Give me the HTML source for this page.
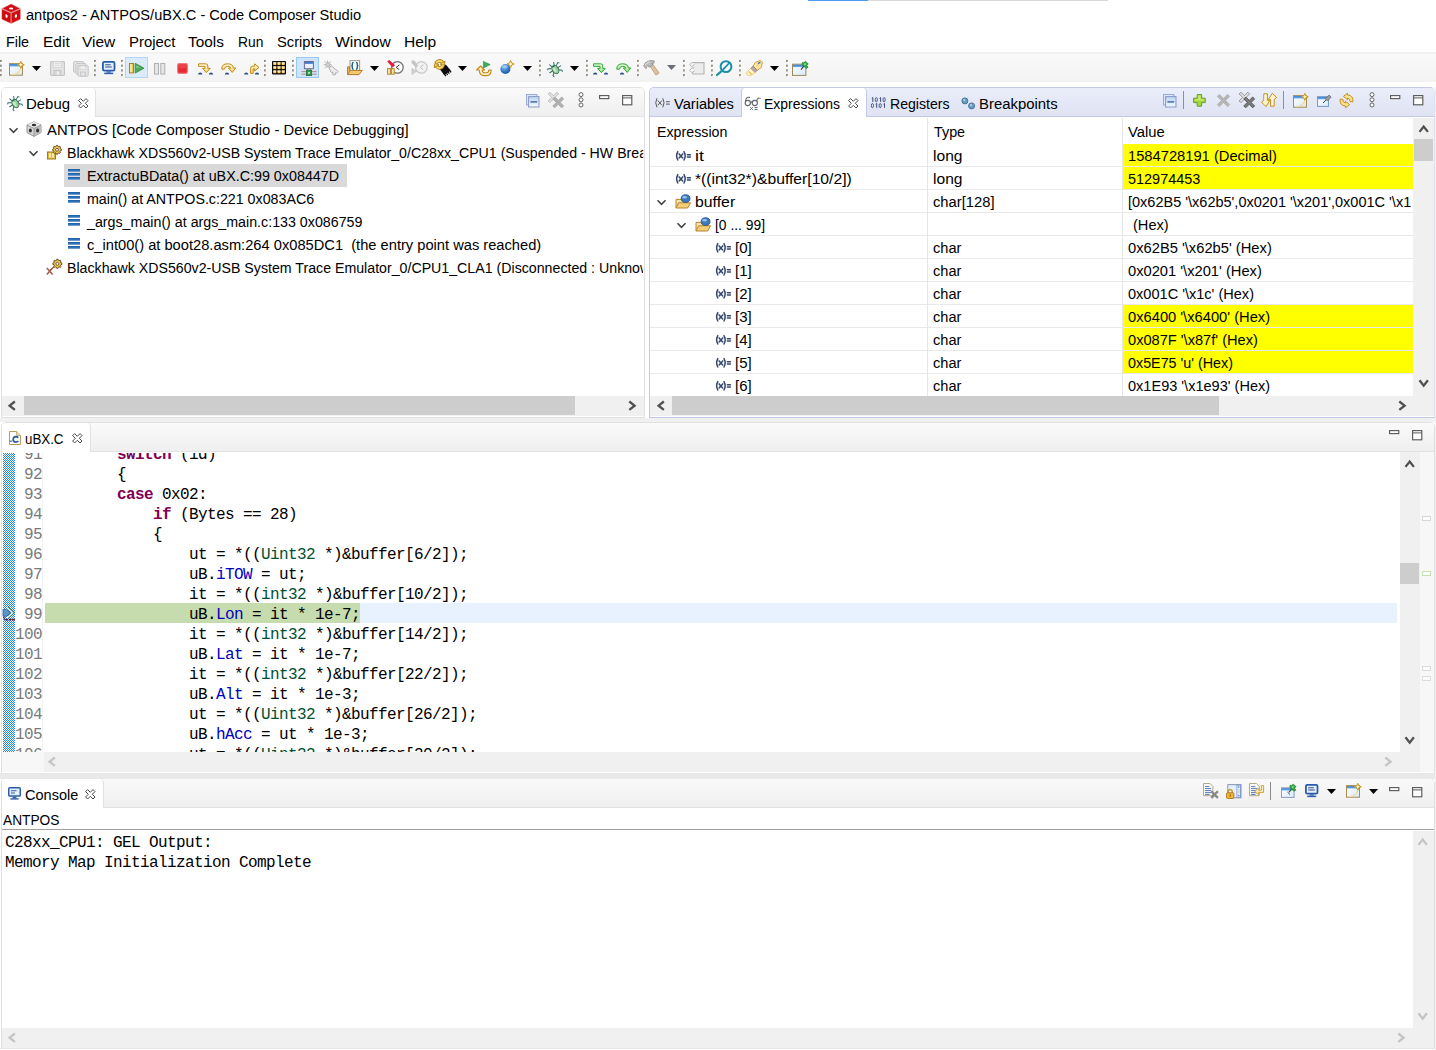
<!DOCTYPE html>
<html>
<head>
<meta charset="utf-8">
<title>antpos2 - ANTPOS/uBX.C - Code Composer Studio</title>
<style>
*{box-sizing:border-box;margin:0;padding:0}
html,body{width:1436px;height:1050px;overflow:hidden;background:#fff}
body{position:relative;font-family:"Liberation Sans",sans-serif;font-size:14.5px;color:#000}
.a{position:absolute}
.t{position:absolute;white-space:pre;line-height:20px;height:20px}
.m{position:absolute;white-space:pre;font-family:"Liberation Mono",monospace;font-size:16px;letter-spacing:-0.602px;line-height:20px;height:20px}
.ln{color:#7a7a7a}
.kw{color:#7f0055;font-weight:bold}
.ty{color:#005032}
.fd{color:#0000c0}
.panel{position:absolute;background:#fff;border:1px solid #e0e0e0;border-radius:5px 5px 0 0}
.tabbar{position:absolute;left:0;top:0;right:0;height:29px;background:linear-gradient(#fafafa,#efefef);border-bottom:1px solid #e2e2e2;border-radius:4px 4px 0 0}
.tab{position:absolute;top:0;height:29px;background:#fff;border-right:1px solid #e2e2e2;border-radius:4px 4px 0 0}
.tab::after{content:"";position:absolute;left:0;right:0;bottom:-1px;height:1px;background:#fff}
svg{position:absolute;overflow:visible}
</style>
</head>
<body>

<!-- ===== title bar ===== -->
<div class="a" style="left:0px;top:0px;width:1436px;height:29px;background:#fff;"></div>
<div class="a" style="left:808px;top:0px;width:60px;height:1px;background:#4d9bf5;"></div>
<div class="a" style="left:868px;top:0px;width:240px;height:1px;background:#d9d9d9;"></div>
<div class="t" style="left:26.0px;top:4.5px;font-size:15.4px;transform:scaleX(0.9482);transform-origin:0 50%;">antpos2 - ANTPOS/uBX.C - Code Composer Studio</div>
<!-- ===== menu bar ===== -->
<div class="t" style="left:5.8px;top:31.5px;font-size:15.4px;transform:scaleX(0.9310);transform-origin:0 50%;">File</div>
<div class="t" style="left:42.8px;top:31.5px;font-size:15.4px;transform:scaleX(1.0064);transform-origin:0 50%;">Edit</div>
<div class="t" style="left:82.0px;top:31.5px;font-size:15.4px;transform:scaleX(1.0032);transform-origin:0 50%;">View</div>
<div class="t" style="left:129.1px;top:31.5px;font-size:15.4px;transform:scaleX(0.9686);transform-origin:0 50%;">Project</div>
<div class="t" style="left:188.3px;top:31.5px;font-size:15.4px;transform:scaleX(0.9990);transform-origin:0 50%;">Tools</div>
<div class="t" style="left:238.2px;top:31.5px;font-size:15.4px;transform:scaleX(0.8961);transform-origin:0 50%;">Run</div>
<div class="t" style="left:276.5px;top:31.5px;font-size:15.4px;transform:scaleX(0.9565);transform-origin:0 50%;">Scripts</div>
<div class="t" style="left:334.5px;top:31.5px;font-size:15.4px;transform:scaleX(1.0174);transform-origin:0 50%;">Window</div>
<div class="t" style="left:404.2px;top:31.5px;font-size:15.4px;transform:scaleX(1.0140);transform-origin:0 50%;">Help</div>
<!-- ===== toolbar ===== -->
<div class="a" style="left:0px;top:52px;width:1436px;height:30px;background:#f6f6f6;background:linear-gradient(#eeeeee 0,#f4f4f4 1.5px,#f9f9f9 3px,#f7f7f7 50%,#f2f2f2 100%)"></div>
<!-- TOOLBAR-ICONS -->
<!-- ===== panel frames ===== -->
<div id="debug" class="panel" style="left:1px;top:87px;width:644px;height:331px">
  <div class="tabbar"></div><div class="tab" style="left:0;width:94px"></div></div>
<div id="expr" class="panel" style="left:649px;top:87px;width:786px;height:331px;border-color:#c3c9e6;border-right-color:#dde1f2">
  <div class="tabbar" style="background:linear-gradient(#eaedfa,#dfe3f2);border-bottom-color:#c3c9e6"></div>
  <div class="tab" style="left:91px;width:126px;border-left:1px solid #c3c9e6;border-right-color:#c3c9e6"></div></div>
<div id="editor" class="panel" style="left:1px;top:422px;width:1434px;height:353px">
  <div class="tabbar"></div><div class="tab" style="left:0;width:89px"></div></div>
<div id="console" class="panel" style="left:1px;top:778px;width:1434px;height:271px">
  <div class="tabbar"></div><div class="tab" style="left:0;width:102px"></div></div>
<!-- ===== Debug view content ===== -->
<svg style="left:7px;top:95px" width="16" height="16" viewBox="0 0 16 16"><g transform="translate(8 8) scale(0.9) rotate(-32) translate(-8 -8)"><g stroke="#2c6a6a" stroke-width="1.1" fill="none" stroke-linecap="round">
<path d="M4.6 5.4 L1.6 3.6 L0.6 4.6 M4 8.4 H0.8 M4.6 11 L2.2 13.2 L2.6 14.6 M11.4 5.4 L14.4 3.6 L15.4 4.6 M12 8.4 H15.2 M11.4 11 L13.8 13.2 L13.4 14.6 M6.4 3.8 L5.4 1 M9.6 3.8 L10.6 1"/></g>
<ellipse cx="8" cy="8.8" rx="3.5" ry="4.9" fill="#9ccb94" stroke="#2c6a5c" stroke-width="1"/>
<ellipse cx="7.2" cy="8.6" rx="1.5" ry="3" fill="#d4ecc8" opacity=".85"/>
<path d="M5.4 4.8 Q8 2.4 10.6 4.8 Q8 6 5.4 4.8Z" fill="#2c6a5c"/></g></svg>
<div class="t" style="left:26.0px;top:93.5px;font-size:15.2px;transform:scaleX(0.9829);transform-origin:0 50%;">Debug</div>
<svg style="left:77.7px;top:97.8px" width="11" height="11" viewBox="0 0 11 11"><path d="M0.6 2.6 L2.6 0.6 L5.3 3.3 L8 0.6 L10 2.6 L7.3 5.3 L10 8 L8 10 L5.3 7.3 L2.6 10 L0.6 8 L3.3 5.3 Z" fill="#fff" stroke="#4c4c4c" stroke-width="1" stroke-linejoin="round"/></svg>
<!-- DEBUG-TB -->
<svg style="left:578px;top:92px" width="6" height="16" viewBox="0 0 6 16"><g fill="#fff" stroke="#666" stroke-width="1"><circle cx="3" cy="2.6" r="2"/><circle cx="3" cy="7.8" r="2"/><circle cx="3" cy="13" r="2"/></g></svg>
<svg style="left:599px;top:94.5px" width="11" height="5" viewBox="0 0 11 5"><rect x="0.6" y="0.6" width="9.2" height="3" fill="#fff" stroke="#5a5a5a" stroke-width="1.15"/></svg>
<svg style="left:622px;top:94.5px" width="11" height="11" viewBox="0 0 11 11"><rect x="0.6" y="0.6" width="9.2" height="9.2" fill="#fff" stroke="#5a5a5a" stroke-width="1.15"/><path d="M0.6 2.9 H9.8" stroke="#5a5a5a" stroke-width="1"/></svg>
<div class="a" style="left:64px;top:164px;width:283px;height:23px;background:#d9d9d9;"></div>
<svg style="left:9.0px;top:127.9px" width="9" height="5" viewBox="0 0 9 5"><path d="M0.5 0.3 L4.5 4.4 L8.5 0.3" fill="none" stroke="#444" stroke-width="1.6"/></svg>
<svg style="left:26px;top:121px" width="16" height="16" viewBox="0 0 16 16"><path d="M8 0.8 L15 4 V11.6 L8 15.4 L1 11.6 V4 Z" fill="#d6d6d6" stroke="#8a8a8a" stroke-width="0.9"/>
<path d="M8 0.8 L15 4 L8 7.4 L1 4Z" fill="#ececec"/>
<path d="M8 7.4 L15 4 V11.6 L8 15.4Z" fill="#bdbdbd"/>
<path d="M1 4 L8 7.4 L15 4 M8 7.4 V15.4" fill="none" stroke="#8e8e8e" stroke-width="0.9"/>
<g fill="#2e2e2e"><ellipse cx="8" cy="4" rx="2.2" ry="1.3"/><ellipse cx="4.4" cy="9.6" rx="1.5" ry="2"/><ellipse cx="11.6" cy="9.6" rx="1.5" ry="2"/></g></svg>
<div class="t" style="left:46.8px;top:119.5px;font-size:15.2px;transform:scaleX(0.9760);transform-origin:0 50%;">ANTPOS [Code Composer Studio - Device Debugging]</div>
<svg style="left:29.0px;top:150.7px" width="9" height="5" viewBox="0 0 9 5"><path d="M0.5 0.3 L4.5 4.4 L8.5 0.3" fill="none" stroke="#444" stroke-width="1.6"/></svg>
<svg style="left:47px;top:145px" width="16" height="16" viewBox="0 0 16 16"><rect x="0.5" y="7" width="8" height="7" fill="#e3b93c" stroke="#a07a1a" stroke-width="1"/><rect x="2.2" y="8.2" width="1.6" height="4.6" fill="#fff3c0"/><rect x="5.2" y="8.2" width="1.6" height="4.6" fill="#fff3c0"/><path d="M14.46 4.22 L14.46 5.38 L13.39 5.71 L13.04 6.55 L13.57 7.54 L12.74 8.37 L11.75 7.84 L10.91 8.19 L10.58 9.26 L9.42 9.26 L9.09 8.19 L8.25 7.84 L7.26 8.37 L6.43 7.54 L6.96 6.55 L6.61 5.71 L5.54 5.38 L5.54 4.22 L6.61 3.89 L6.96 3.05 L6.43 2.06 L7.26 1.23 L8.25 1.76 L9.09 1.41 L9.42 0.34 L10.58 0.34 L10.91 1.41 L11.75 1.76 L12.74 1.23 L13.57 2.06 L13.04 3.05 L13.39 3.89Z" fill="#f2c54e" stroke="#5e3c1e" stroke-width="0.9" stroke-linejoin="round"/><circle cx="10" cy="4.8" r="1.44" fill="#fff" stroke="#5e3c1e" stroke-width="0.8"/></svg>
<div class="t" style="left:67.0px;top:142.5px;font-size:15.2px;transform:scaleX(0.9324);transform-origin:0 50%;width:617.73px;overflow:hidden;">Blackhawk XDS560v2-USB System Trace Emulator_0/C28xx_CPU1 (Suspended - HW Breakpoint)</div>
<svg style="left:68px;top:169.0px" width="12" height="11" viewBox="0 0 12 11"><rect x="0" y="0" width="12" height="3" fill="url(#sfg)"/><rect x="0" y="4" width="12" height="3" fill="url(#sfg)"/><rect x="0" y="8" width="12" height="3" fill="url(#sfg)"/></svg>
<div class="t" style="left:86.8px;top:165.5px;font-size:15.2px;transform:scaleX(0.9420);transform-origin:0 50%;">ExtractuBData() at uBX.C:99 0x08447D</div>
<svg style="left:68px;top:192.0px" width="12" height="11" viewBox="0 0 12 11"><rect x="0" y="0" width="12" height="3" fill="url(#sfg)"/><rect x="0" y="4" width="12" height="3" fill="url(#sfg)"/><rect x="0" y="8" width="12" height="3" fill="url(#sfg)"/></svg>
<div class="t" style="left:86.8px;top:188.5px;font-size:15.2px;transform:scaleX(0.9374);transform-origin:0 50%;">main() at ANTPOS.c:221 0x083AC6</div>
<svg style="left:68px;top:215.0px" width="12" height="11" viewBox="0 0 12 11"><rect x="0" y="0" width="12" height="3" fill="url(#sfg)"/><rect x="0" y="4" width="12" height="3" fill="url(#sfg)"/><rect x="0" y="8" width="12" height="3" fill="url(#sfg)"/></svg>
<div class="t" style="left:86.8px;top:211.5px;font-size:15.2px;transform:scaleX(0.9373);transform-origin:0 50%;">_args_main() at args_main.c:133 0x086759</div>
<svg style="left:68px;top:238.0px" width="12" height="11" viewBox="0 0 12 11"><rect x="0" y="0" width="12" height="3" fill="url(#sfg)"/><rect x="0" y="4" width="12" height="3" fill="url(#sfg)"/><rect x="0" y="8" width="12" height="3" fill="url(#sfg)"/></svg>
<div class="t" style="left:86.8px;top:234.5px;font-size:15.2px;transform:scaleX(0.9659);transform-origin:0 50%;">c_int00() at boot28.asm:264 0x085DC1  (the entry point was reached)</div>
<svg style="left:45.5px;top:259px" width="17" height="17" viewBox="0 0 17 17"><path d="M3.8 11.6 L10 6" stroke="#8a5a4a" stroke-width="1.2"/><path d="M0.8 9 L6.6 15.6 M6.6 9 L0.8 15.6" stroke="#a65a48" stroke-width="1.5"/><path d="M15.96 4.20 L15.96 5.40 L14.86 5.73 L14.51 6.59 L15.05 7.60 L14.20 8.45 L13.19 7.91 L12.33 8.26 L12.00 9.36 L10.80 9.36 L10.47 8.26 L9.61 7.91 L8.60 8.45 L7.75 7.60 L8.29 6.59 L7.94 5.73 L6.84 5.40 L6.84 4.20 L7.94 3.87 L8.29 3.01 L7.75 2.00 L8.60 1.15 L9.61 1.69 L10.47 1.34 L10.80 0.24 L12.00 0.24 L12.33 1.34 L13.19 1.69 L14.20 1.15 L15.05 2.00 L14.51 3.01 L14.86 3.87Z" fill="#f2c54e" stroke="#5e3c1e" stroke-width="0.9" stroke-linejoin="round"/><circle cx="11.4" cy="4.8" r="1.47" fill="#fff" stroke="#5e3c1e" stroke-width="0.8"/></svg>
<div class="t" style="left:67.0px;top:257.5px;font-size:15.2px;transform:scaleX(0.9337);transform-origin:0 50%;width:616.90px;overflow:hidden;">Blackhawk XDS560v2-USB System Trace Emulator_0/CPU1_CLA1 (Disconnected : Unknown)</div>
<div class="a" style="left:2px;top:396px;width:642px;height:20px;background:#f0f0f0;"></div>
<div class="a" style="left:24px;top:396px;width:551px;height:19px;background:#cdcdcd;"></div>
<svg style="left:9.4px;top:400.8px" width="6.2" height="9.4" viewBox="0 0 6.2 9.4"><path d="M5.9 0.5 L0.6 4.7 L5.9 8.9" fill="none" stroke="#505050" stroke-width="2.3"/></svg>
<svg style="left:629.4px;top:400.8px" width="6.2" height="9.4" viewBox="0 0 6.2 9.4"><path d="M0.3 0.5 L5.6000000000000005 4.7 L0.3 8.9" fill="none" stroke="#505050" stroke-width="2.3"/></svg>
<!-- ===== Expressions view content ===== -->
<svg style="left:653.8px;top:98px" width="16" height="10" viewBox="0 0 16 10"><g fill="none" stroke="#5a5a5a" stroke-width="1.0" stroke-linecap="round"><path d="M2.8 0.6 Q0.5 4.8 2.8 9"/><path d="M9 0.6 Q11.3 4.8 9 9"/><path d="M4.1 2.9 L7.7 6.9 M7.7 2.9 L4.1 6.9"/><path d="M12.4 3.7 H15.4 M12.4 6.1 H15.4"/></g></svg>
<div class="t" style="left:673.8px;top:93.5px;font-size:15.2px;transform:scaleX(0.9630);transform-origin:0 50%;">Variables</div>
<svg style="left:744px;top:95px" width="17" height="16" viewBox="0 0 17 16"><g fill="none" stroke="#5f6670" stroke-width="1.1" stroke-linecap="round"><circle cx="3.8" cy="8" r="2.6"/><circle cx="10.8" cy="8" r="2.6"/><path d="M6.4 7.4 Q7.3 6.4 8.2 7.4"/><path d="M1.6 6 Q2 1.6 5.6 2.4 M12.8 5.6 Q14 2 16.2 3.4"/></g><g stroke="#5f6670" stroke-width="1" fill="none"><path d="M6.2 12.2 L8.8 14.8 M8.8 12.2 L6.2 14.8 M10.6 12.6 H13.6 M10.6 14.6 H13.6"/></g></svg>
<div class="t" style="left:763.8px;top:93.5px;font-size:15.2px;transform:scaleX(0.9186);transform-origin:0 50%;">Expressions</div>
<svg style="left:847.7px;top:98px" width="11" height="11" viewBox="0 0 11 11"><path d="M0.6 2.6 L2.6 0.6 L5.3 3.3 L8 0.6 L10 2.6 L7.3 5.3 L10 8 L8 10 L5.3 7.3 L2.6 10 L0.6 8 L3.3 5.3 Z" fill="#fff" stroke="#4c4c4c" stroke-width="1" stroke-linejoin="round"/></svg>
<svg style="left:871px;top:97px" width="15" height="11" viewBox="0 0 15 11"><path d="M0.8 1.3 L1.8 0.5 V4.9" stroke="#3a4e78" stroke-width="1" fill="none"/><ellipse cx="5.3" cy="2.7" rx="1.1" ry="2.1" fill="none" stroke="#3a4e78" stroke-width="0.9"/><path d="M8.6 1.3 L9.6 0.5 V4.9" stroke="#3a4e78" stroke-width="1" fill="none"/><ellipse cx="13.1" cy="2.7" rx="1.1" ry="2.1" fill="none" stroke="#3a4e78" stroke-width="0.9"/><ellipse cx="1.4" cy="8.6" rx="1.1" ry="2.1" fill="none" stroke="#3a4e78" stroke-width="0.9"/><path d="M4.7 7.2 L5.7 6.4 V10.8" stroke="#3a4e78" stroke-width="1" fill="none"/><ellipse cx="9.2" cy="8.6" rx="1.1" ry="2.1" fill="none" stroke="#3a4e78" stroke-width="0.9"/><path d="M12.5 7.2 L13.5 6.4 V10.8" stroke="#3a4e78" stroke-width="1" fill="none"/></svg>
<div class="t" style="left:889.8px;top:93.5px;font-size:15.2px;transform:scaleX(0.9274);transform-origin:0 50%;">Registers</div>
<svg style="left:960.6px;top:96.6px" width="15" height="14" viewBox="0 0 15 14"><circle cx="3.9" cy="3.9" r="3" fill="#6a9cc4" stroke="#3c6c94" stroke-width="0.9"/><circle cx="3.3" cy="3.1" r="1.1" fill="#b5d2ea"/><circle cx="10.6" cy="8.9" r="3" fill="#6a9cc4" stroke="#3c6c94" stroke-width="0.9"/><circle cx="10" cy="8.1" r="1.1" fill="#b5d2ea"/></svg>
<div class="t" style="left:979.3px;top:93.5px;font-size:15.2px;transform:scaleX(0.9800);transform-origin:0 50%;">Breakpoints</div>
<!-- EXPR-TB -->
<svg style="left:1369px;top:92px" width="6" height="16" viewBox="0 0 6 16"><g fill="#fff" stroke="#666" stroke-width="1"><circle cx="3" cy="2.6" r="2"/><circle cx="3" cy="7.8" r="2"/><circle cx="3" cy="13" r="2"/></g></svg>
<svg style="left:1390px;top:94.5px" width="11" height="5" viewBox="0 0 11 5"><rect x="0.6" y="0.6" width="9.2" height="3" fill="#fff" stroke="#5a5a5a" stroke-width="1.15"/></svg>
<svg style="left:1413px;top:94.5px" width="11" height="11" viewBox="0 0 11 11"><rect x="0.6" y="0.6" width="9.2" height="9.2" fill="#fff" stroke="#5a5a5a" stroke-width="1.15"/><path d="M0.6 2.9 H9.8" stroke="#5a5a5a" stroke-width="1"/></svg>
<div class="a" style="left:650px;top:166px;width:763px;height:1px;background:#e9e9e9;"></div>
<div class="a" style="left:650px;top:189px;width:763px;height:1px;background:#e9e9e9;"></div>
<div class="a" style="left:650px;top:212px;width:763px;height:1px;background:#e9e9e9;"></div>
<div class="a" style="left:650px;top:235px;width:763px;height:1px;background:#e9e9e9;"></div>
<div class="a" style="left:650px;top:258px;width:763px;height:1px;background:#e9e9e9;"></div>
<div class="a" style="left:650px;top:281px;width:763px;height:1px;background:#e9e9e9;"></div>
<div class="a" style="left:650px;top:304px;width:763px;height:1px;background:#e9e9e9;"></div>
<div class="a" style="left:650px;top:327px;width:763px;height:1px;background:#e9e9e9;"></div>
<div class="a" style="left:650px;top:350px;width:763px;height:1px;background:#e9e9e9;"></div>
<div class="a" style="left:650px;top:373px;width:763px;height:1px;background:#e9e9e9;"></div>
<div class="a" style="left:927px;top:118px;width:1px;height:278px;background:#e6e6e6;"></div>
<div class="a" style="left:1122px;top:118px;width:1px;height:278px;background:#e6e6e6;"></div>
<div class="a" style="left:1123px;top:144px;width:290px;height:22px;background:#ffff00;"></div>
<div class="a" style="left:1123px;top:167px;width:290px;height:22px;background:#ffff00;"></div>
<div class="a" style="left:1123px;top:305px;width:290px;height:22px;background:#ffff00;"></div>
<div class="a" style="left:1123px;top:328px;width:290px;height:22px;background:#ffff00;"></div>
<div class="a" style="left:1123px;top:351px;width:290px;height:22px;background:#ffff00;"></div>
<div class="t" style="left:656.8px;top:121.5px;font-size:15.2px;transform:scaleX(0.9369);transform-origin:0 50%;">Expression</div>
<div class="t" style="left:933.8px;top:121.5px;font-size:15.2px;transform:scaleX(0.9442);transform-origin:0 50%;">Type</div>
<div class="t" style="left:1128.1px;top:121.5px;font-size:15.2px;transform:scaleX(0.9756);transform-origin:0 50%;">Value</div>
<svg style="left:674.6px;top:150.8px" width="16" height="10" viewBox="0 0 16 10"><g fill="none" stroke="#34486f" stroke-width="1.5" stroke-linecap="round"><path d="M2.8 0.6 Q0.5 4.8 2.8 9"/><path d="M9 0.6 Q11.3 4.8 9 9"/><path d="M4.1 2.9 L7.7 6.9 M7.7 2.9 L4.1 6.9"/><path d="M12.4 3.7 H15.4 M12.4 6.1 H15.4"/></g></svg>
<div class="t" style="left:695.3px;top:145.5px;font-size:15.2px;transform:scaleX(1.1720);transform-origin:0 50%;">it</div>
<div class="t" style="left:933.0px;top:145.5px;font-size:15.2px;transform:scaleX(1.0272);transform-origin:0 50%;">long</div>
<div class="t" style="left:1128.1px;top:145.5px;font-size:15.2px;transform:scaleX(0.9684);transform-origin:0 50%;">1584728191 (Decimal)</div>
<svg style="left:674.6px;top:173.8px" width="16" height="10" viewBox="0 0 16 10"><g fill="none" stroke="#34486f" stroke-width="1.5" stroke-linecap="round"><path d="M2.8 0.6 Q0.5 4.8 2.8 9"/><path d="M9 0.6 Q11.3 4.8 9 9"/><path d="M4.1 2.9 L7.7 6.9 M7.7 2.9 L4.1 6.9"/><path d="M12.4 3.7 H15.4 M12.4 6.1 H15.4"/></g></svg>
<div class="t" style="left:695.3px;top:168.5px;font-size:15.2px;transform:scaleX(1.0337);transform-origin:0 50%;">*((int32*)&amp;buffer[10/2])</div>
<div class="t" style="left:933.0px;top:168.5px;font-size:15.2px;transform:scaleX(1.0272);transform-origin:0 50%;">long</div>
<div class="t" style="left:1128.1px;top:168.5px;font-size:15.2px;transform:scaleX(0.9509);transform-origin:0 50%;">512974453</div>
<svg style="left:657.0px;top:199.5px" width="9" height="5" viewBox="0 0 9 5"><path d="M0.5 0.3 L4.5 4.4 L8.5 0.3" fill="none" stroke="#444" stroke-width="1.6"/></svg>
<svg style="left:675px;top:193.5px" width="17" height="16" viewBox="0 0 17 16"><path d="M1 14 V5.4 H6 L7.4 7 H12.4 V9" fill="#f7e3a6" stroke="#b8842a" stroke-width="1"/><path d="M1 14 L3.6 8.8 H15.6 L12.6 14 Z" fill="#f4cf78" stroke="#b8842a" stroke-width="1" stroke-linejoin="round"/><ellipse cx="10.6" cy="4.6" rx="4.4" ry="3.8" fill="#3d78bd" stroke="#24528c" stroke-width="0.9"/><ellipse cx="9.6" cy="3.2" rx="2.4" ry="1.3" fill="#9cc3ea"/></svg>
<div class="t" style="left:695.3px;top:191.5px;font-size:15.2px;transform:scaleX(1.0425);transform-origin:0 50%;">buffer</div>
<div class="t" style="left:933.0px;top:191.5px;font-size:15.2px;transform:scaleX(0.9711);transform-origin:0 50%;">char[128]</div>
<div class="t" style="left:1128.1px;top:191.5px;font-size:15.2px;transform:scaleX(0.9551);transform-origin:0 50%;">[0x62B5 '\x62b5',0x0201 '\x201',0x001C '\x1</div>
<svg style="left:677.0px;top:222.5px" width="9" height="5" viewBox="0 0 9 5"><path d="M0.5 0.3 L4.5 4.4 L8.5 0.3" fill="none" stroke="#444" stroke-width="1.6"/></svg>
<svg style="left:695px;top:216.5px" width="17" height="16" viewBox="0 0 17 16"><path d="M1 14 V5.4 H6 L7.4 7 H12.4 V9" fill="#f7e3a6" stroke="#b8842a" stroke-width="1"/><path d="M1 14 L3.6 8.8 H15.6 L12.6 14 Z" fill="#f4cf78" stroke="#b8842a" stroke-width="1" stroke-linejoin="round"/><ellipse cx="10.6" cy="4.6" rx="4.4" ry="3.8" fill="#3d78bd" stroke="#24528c" stroke-width="0.9"/><ellipse cx="9.6" cy="3.2" rx="2.4" ry="1.3" fill="#9cc3ea"/></svg>
<div class="t" style="left:715.3px;top:214.5px;font-size:15.2px;transform:scaleX(0.9109);transform-origin:0 50%;">[0 ... 99]</div>
<div class="t" style="left:1132.5px;top:214.5px;font-size:15.2px;transform:scaleX(0.9616);transform-origin:0 50%;">(Hex)</div>
<svg style="left:714.6px;top:242.8px" width="16" height="10" viewBox="0 0 16 10"><g fill="none" stroke="#34486f" stroke-width="1.5" stroke-linecap="round"><path d="M2.8 0.6 Q0.5 4.8 2.8 9"/><path d="M9 0.6 Q11.3 4.8 9 9"/><path d="M4.1 2.9 L7.7 6.9 M7.7 2.9 L4.1 6.9"/><path d="M12.4 3.7 H15.4 M12.4 6.1 H15.4"/></g></svg>
<div class="t" style="left:735.3px;top:237.5px;font-size:15.2px;transform:scaleX(0.9887);transform-origin:0 50%;">[0]</div>
<div class="t" style="left:933.0px;top:237.5px;font-size:15.2px;transform:scaleX(0.9612);transform-origin:0 50%;">char</div>
<div class="t" style="left:1128.1px;top:237.5px;font-size:15.2px;transform:scaleX(0.9685);transform-origin:0 50%;">0x62B5 '\x62b5' (Hex)</div>
<svg style="left:714.6px;top:265.8px" width="16" height="10" viewBox="0 0 16 10"><g fill="none" stroke="#34486f" stroke-width="1.5" stroke-linecap="round"><path d="M2.8 0.6 Q0.5 4.8 2.8 9"/><path d="M9 0.6 Q11.3 4.8 9 9"/><path d="M4.1 2.9 L7.7 6.9 M7.7 2.9 L4.1 6.9"/><path d="M12.4 3.7 H15.4 M12.4 6.1 H15.4"/></g></svg>
<div class="t" style="left:735.3px;top:260.5px;font-size:15.2px;transform:scaleX(0.9887);transform-origin:0 50%;">[1]</div>
<div class="t" style="left:933.0px;top:260.5px;font-size:15.2px;transform:scaleX(0.9612);transform-origin:0 50%;">char</div>
<div class="t" style="left:1128.1px;top:260.5px;font-size:15.2px;transform:scaleX(0.9672);transform-origin:0 50%;">0x0201 '\x201' (Hex)</div>
<svg style="left:714.6px;top:288.8px" width="16" height="10" viewBox="0 0 16 10"><g fill="none" stroke="#34486f" stroke-width="1.5" stroke-linecap="round"><path d="M2.8 0.6 Q0.5 4.8 2.8 9"/><path d="M9 0.6 Q11.3 4.8 9 9"/><path d="M4.1 2.9 L7.7 6.9 M7.7 2.9 L4.1 6.9"/><path d="M12.4 3.7 H15.4 M12.4 6.1 H15.4"/></g></svg>
<div class="t" style="left:735.3px;top:283.5px;font-size:15.2px;transform:scaleX(0.9887);transform-origin:0 50%;">[2]</div>
<div class="t" style="left:933.0px;top:283.5px;font-size:15.2px;transform:scaleX(0.9612);transform-origin:0 50%;">char</div>
<div class="t" style="left:1128.1px;top:283.5px;font-size:15.2px;transform:scaleX(0.9576);transform-origin:0 50%;">0x001C '\x1c' (Hex)</div>
<svg style="left:714.6px;top:311.8px" width="16" height="10" viewBox="0 0 16 10"><g fill="none" stroke="#34486f" stroke-width="1.5" stroke-linecap="round"><path d="M2.8 0.6 Q0.5 4.8 2.8 9"/><path d="M9 0.6 Q11.3 4.8 9 9"/><path d="M4.1 2.9 L7.7 6.9 M7.7 2.9 L4.1 6.9"/><path d="M12.4 3.7 H15.4 M12.4 6.1 H15.4"/></g></svg>
<div class="t" style="left:735.3px;top:306.5px;font-size:15.2px;transform:scaleX(0.9887);transform-origin:0 50%;">[3]</div>
<div class="t" style="left:933.0px;top:306.5px;font-size:15.2px;transform:scaleX(0.9612);transform-origin:0 50%;">char</div>
<div class="t" style="left:1128.1px;top:306.5px;font-size:15.2px;transform:scaleX(0.9680);transform-origin:0 50%;">0x6400 '\x6400' (Hex)</div>
<svg style="left:714.6px;top:334.8px" width="16" height="10" viewBox="0 0 16 10"><g fill="none" stroke="#34486f" stroke-width="1.5" stroke-linecap="round"><path d="M2.8 0.6 Q0.5 4.8 2.8 9"/><path d="M9 0.6 Q11.3 4.8 9 9"/><path d="M4.1 2.9 L7.7 6.9 M7.7 2.9 L4.1 6.9"/><path d="M12.4 3.7 H15.4 M12.4 6.1 H15.4"/></g></svg>
<div class="t" style="left:735.3px;top:329.5px;font-size:15.2px;transform:scaleX(0.9887);transform-origin:0 50%;">[4]</div>
<div class="t" style="left:933.0px;top:329.5px;font-size:15.2px;transform:scaleX(0.9612);transform-origin:0 50%;">char</div>
<div class="t" style="left:1128.1px;top:329.5px;font-size:15.2px;transform:scaleX(0.9626);transform-origin:0 50%;">0x087F '\x87f' (Hex)</div>
<svg style="left:714.6px;top:357.8px" width="16" height="10" viewBox="0 0 16 10"><g fill="none" stroke="#34486f" stroke-width="1.5" stroke-linecap="round"><path d="M2.8 0.6 Q0.5 4.8 2.8 9"/><path d="M9 0.6 Q11.3 4.8 9 9"/><path d="M4.1 2.9 L7.7 6.9 M7.7 2.9 L4.1 6.9"/><path d="M12.4 3.7 H15.4 M12.4 6.1 H15.4"/></g></svg>
<div class="t" style="left:735.3px;top:352.5px;font-size:15.2px;transform:scaleX(0.9887);transform-origin:0 50%;">[5]</div>
<div class="t" style="left:933.0px;top:352.5px;font-size:15.2px;transform:scaleX(0.9612);transform-origin:0 50%;">char</div>
<div class="t" style="left:1128.1px;top:352.5px;font-size:15.2px;transform:scaleX(0.9432);transform-origin:0 50%;">0x5E75 'u' (Hex)</div>
<svg style="left:714.6px;top:380.8px" width="16" height="10" viewBox="0 0 16 10"><g fill="none" stroke="#34486f" stroke-width="1.5" stroke-linecap="round"><path d="M2.8 0.6 Q0.5 4.8 2.8 9"/><path d="M9 0.6 Q11.3 4.8 9 9"/><path d="M4.1 2.9 L7.7 6.9 M7.7 2.9 L4.1 6.9"/><path d="M12.4 3.7 H15.4 M12.4 6.1 H15.4"/></g></svg>
<div class="t" style="left:735.3px;top:375.5px;font-size:15.2px;transform:scaleX(0.9887);transform-origin:0 50%;">[6]</div>
<div class="t" style="left:933.0px;top:375.5px;font-size:15.2px;transform:scaleX(0.9612);transform-origin:0 50%;">char</div>
<div class="t" style="left:1128.1px;top:375.5px;font-size:15.2px;transform:scaleX(0.9570);transform-origin:0 50%;">0x1E93 '\x1e93' (Hex)</div>
<div class="a" style="left:650px;top:396px;width:784px;height:20px;background:#f0f0f0;"></div>
<div class="a" style="left:672px;top:396px;width:547px;height:19px;background:#cdcdcd;"></div>
<svg style="left:657.6999999999999px;top:400.8px" width="6.2" height="9.4" viewBox="0 0 6.2 9.4"><path d="M5.9 0.5 L0.6 4.7 L5.9 8.9" fill="none" stroke="#505050" stroke-width="2.3"/></svg>
<svg style="left:1399.3000000000002px;top:400.8px" width="6.2" height="9.4" viewBox="0 0 6.2 9.4"><path d="M0.3 0.5 L5.6000000000000005 4.7 L0.3 8.9" fill="none" stroke="#505050" stroke-width="2.3"/></svg>
<div class="a" style="left:1413px;top:118px;width:21px;height:278px;background:#f0f0f0;"></div>
<div class="a" style="left:1414px;top:139px;width:19px;height:22px;background:#cdcdcd;"></div>
<svg style="left:1418.8px;top:125.70000000000002px" width="9.4" height="6.2" viewBox="0 0 9.4 6.2"><path d="M0.5 5.9 L4.7 0.6 L8.9 5.9" fill="none" stroke="#505050" stroke-width="2.3"/></svg>
<svg style="left:1418.8px;top:380.4px" width="9.4" height="6.2" viewBox="0 0 9.4 6.2"><path d="M0.5 0.3 L4.7 5.6000000000000005 L8.9 0.3" fill="none" stroke="#505050" stroke-width="2.3"/></svg>
<!-- ===== Editor content ===== -->
<div class="a" style="left:0px;top:418px;width:1436px;height:4px;background:#f0f0f0;"></div>
<!-- editor tab -->
<svg style="left:9px;top:431px" width="12" height="14" viewBox="0 0 12 14"><path d="M0.5 0.5 H7.6 L11.5 4.4 V13.5 H0.5 Z" fill="#fdfdfd" stroke="#b59a5a" stroke-width="1"/><path d="M7.6 0.5 V4.4 H11.5" fill="#f0e2b4" stroke="#b59a5a" stroke-width="0.8"/><rect x="1.2" y="9.4" width="1.5" height="1.6" fill="#3a6ea8"/><path d="M9.4 6.6 Q8.4 5.6 6.8 5.6 Q4.2 5.8 4.2 8.4 Q4.2 11 6.8 11.1 Q8.4 11.1 9.4 10.2" fill="none" stroke="#2d5f9e" stroke-width="1.7"/></svg>
<div class="t" style="left:25.3px;top:428.5px;font-size:15.2px;transform:scaleX(0.8769);transform-origin:0 50%;">uBX.C</div>
<svg style="left:72px;top:433px" width="11" height="11" viewBox="0 0 11 11"><path d="M0.6 2.6 L2.6 0.6 L5.3 3.3 L8 0.6 L10 2.6 L7.3 5.3 L10 8 L8 10 L5.3 7.3 L2.6 10 L0.6 8 L3.3 5.3 Z" fill="#fff" stroke="#4c4c4c" stroke-width="1" stroke-linejoin="round"/></svg>
<svg style="left:1389px;top:429.5px" width="11" height="5" viewBox="0 0 11 5"><rect x="0.6" y="0.6" width="9.2" height="3" fill="#fff" stroke="#5a5a5a" stroke-width="1.15"/></svg>
<svg style="left:1412px;top:429.5px" width="11" height="11" viewBox="0 0 11 11"><rect x="0.6" y="0.6" width="9.2" height="9.2" fill="#fff" stroke="#5a5a5a" stroke-width="1.15"/><path d="M0.6 2.9 H9.8" stroke="#5a5a5a" stroke-width="1"/></svg>
<div class="a" id="edarea" style="left:2px;top:453px;width:1398px;height:299px;overflow:hidden;background:#fff">
<div class="a" style="left:1px;top:-1px;width:12px;height:300px;background:#fff;background:repeating-conic-gradient(#1f86f2 0 25%,#fff 0 50%) 0 0/2px 2px"></div>
<div class="a" style="left:40px;top:-1px;width:1px;height:300px;background:#f3f3f3;"></div>
<div class="a" style="left:43px;top:150px;width:1352px;height:20px;background:#e8f2fe;"></div>
<div class="a" style="left:43px;top:150px;width:315px;height:20px;background:#c6dbae;"></div>
<div class="m ln" style="left:22px;top:-8px">91</div>
<div class="m" style="left:115px;top:-8px"><span class="kw">switch</span> (id)</div>
<div class="m ln" style="left:22px;top:12px">92</div>
<div class="m" style="left:115px;top:12px">{</div>
<div class="m ln" style="left:22px;top:32px">93</div>
<div class="m" style="left:115px;top:32px"><span class="kw">case</span> 0x02:</div>
<div class="m ln" style="left:22px;top:52px">94</div>
<div class="m" style="left:151px;top:52px"><span class="kw">if</span> (Bytes == 28)</div>
<div class="m ln" style="left:22px;top:72px">95</div>
<div class="m" style="left:151px;top:72px">{</div>
<div class="m ln" style="left:22px;top:92px">96</div>
<div class="m" style="left:187px;top:92px">ut = *((<span class="ty">Uint32</span> *)&amp;buffer[6/2]);</div>
<div class="m ln" style="left:22px;top:112px">97</div>
<div class="m" style="left:187px;top:112px">uB.<span class="fd">iTOW</span> = ut;</div>
<div class="m ln" style="left:22px;top:132px">98</div>
<div class="m" style="left:187px;top:132px">it = *((<span class="ty">int32</span> *)&amp;buffer[10/2]);</div>
<div class="m ln" style="left:22px;top:152px">99</div>
<div class="m" style="left:187px;top:152px">uB.<span class="fd">Lon</span> = it * 1e-7;</div>
<div class="m ln" style="left:13px;top:172px">100</div>
<div class="m" style="left:187px;top:172px">it = *((<span class="ty">int32</span> *)&amp;buffer[14/2]);</div>
<div class="m ln" style="left:13px;top:192px">101</div>
<div class="m" style="left:187px;top:192px">uB.<span class="fd">Lat</span> = it * 1e-7;</div>
<div class="m ln" style="left:13px;top:212px">102</div>
<div class="m" style="left:187px;top:212px">it = *((<span class="ty">int32</span> *)&amp;buffer[22/2]);</div>
<div class="m ln" style="left:13px;top:232px">103</div>
<div class="m" style="left:187px;top:232px">uB.<span class="fd">Alt</span> = it * 1e-3;</div>
<div class="m ln" style="left:13px;top:252px">104</div>
<div class="m" style="left:187px;top:252px">ut = *((<span class="ty">Uint32</span> *)&amp;buffer[26/2]);</div>
<div class="m ln" style="left:13px;top:272px">105</div>
<div class="m" style="left:187px;top:272px">uB.<span class="fd">hAcc</span> = ut * 1e-3;</div>
<div class="m ln" style="left:13px;top:292px">106</div>
<div class="m" style="left:187px;top:292px">ut = *((<span class="ty">Uint32</span> *)&amp;buffer[30/2]);</div>
</div>
<svg style="left:3px;top:606px" width="13" height="16" viewBox="0 0 13 16"><path d="M5.2 0.6 L12 6.6 L5.2 12.6 Z" fill="#3f8a7a" stroke="#2e6e62" stroke-width="0.6"/><path d="M0 3.4 H3.6 L7.6 6.8 L3.6 10.2 H0 Z" fill="#5b95cc" stroke="#2b5f97" stroke-width="0.8"/><path d="M3.8 1.4 L9.6 6.8 L3.8 12.2" fill="none" stroke="#eef4fa" stroke-width="1.4"/><path d="M0.4 10.8 L2 13.8" stroke="#1d3f6b" stroke-width="1.2"/><path d="M2.4 13.6 H12" stroke="#7a0c0c" stroke-width="1.7" stroke-dasharray="2.6 0.8"/></svg>
<div class="a" style="left:1400px;top:452px;width:20px;height:320px;background:#f0f0f0;"></div>
<div class="a" style="left:1400px;top:563px;width:19px;height:21px;background:#cdcdcd;"></div>
<svg style="left:1404.8px;top:460.7px" width="9.4" height="6.2" viewBox="0 0 9.4 6.2"><path d="M0.5 5.9 L4.7 0.6 L8.9 5.9" fill="none" stroke="#505050" stroke-width="2.3"/></svg>
<svg style="left:1404.8px;top:737.1999999999999px" width="9.4" height="6.2" viewBox="0 0 9.4 6.2"><path d="M0.5 0.3 L4.7 5.6000000000000005 L8.9 0.3" fill="none" stroke="#505050" stroke-width="2.3"/></svg>
<div class="a" style="left:1420px;top:452px;width:14px;height:320px;background:#f7f7f7;"></div>
<div class="a" style="left:1422px;top:516px;width:9px;height:5px;background:#fbfbfb;border:1px solid #d8d8d8"></div>
<div class="a" style="left:1422px;top:571px;width:9px;height:5px;background:#fbfbfb;border:1px solid #c5e0b4"></div>
<div class="a" style="left:1422px;top:666px;width:9px;height:5px;background:#fbfbfb;border:1px solid #dcdcdc"></div>
<div class="a" style="left:1422px;top:676px;width:9px;height:5px;background:#fbfbfb;border:1px solid #dcdcdc"></div>
<div class="a" style="left:2px;top:752px;width:1398px;height:20px;background:#f0f0f0;"></div>
<div class="a" style="left:2px;top:752px;width:42px;height:20px;background:#f7f7f7;"></div>
<svg style="left:49.4px;top:756.8px" width="6.2" height="9.4" viewBox="0 0 6.2 9.4"><path d="M5.9 0.5 L0.6 4.7 L5.9 8.9" fill="none" stroke="#c4c4c4" stroke-width="2.3"/></svg>
<svg style="left:1385.4px;top:756.8px" width="6.2" height="9.4" viewBox="0 0 6.2 9.4"><path d="M0.3 0.5 L5.6000000000000005 4.7 L0.3 8.9" fill="none" stroke="#c4c4c4" stroke-width="2.3"/></svg>
<div class="a" style="left:0px;top:773px;width:1436px;height:6px;background:#e9e9e9;"></div>
<div class="a" style="left:0px;top:773px;width:1436px;height:1px;background:#e6e6e6;"></div>
<!-- ===== Console content ===== -->
<svg style="left:8px;top:787px" width="14" height="14" viewBox="0 0 14 14"><g transform="scale(0.93)"><rect x="0.8" y="0.8" width="12.4" height="9" rx="1.2" fill="#e8f0fb" stroke="#2a5ca8" stroke-width="1.6"/><path d="M3.2 4 H9.2 M3.2 6.4 H7.4" stroke="#2a5ca8" stroke-width="1.1"/><path d="M5 10.4 H9 V12 H5Z" fill="#2a5ca8"/><path d="M2.6 12.8 H11.4" stroke="#2a5ca8" stroke-width="1.5"/></g></svg>
<div class="t" style="left:25.2px;top:784.5px;font-size:15.2px;transform:scaleX(0.9563);transform-origin:0 50%;">Console</div>
<svg style="left:84.7px;top:789px" width="11" height="11" viewBox="0 0 11 11"><path d="M0.6 2.6 L2.6 0.6 L5.3 3.3 L8 0.6 L10 2.6 L7.3 5.3 L10 8 L8 10 L5.3 7.3 L2.6 10 L0.6 8 L3.3 5.3 Z" fill="#fff" stroke="#4c4c4c" stroke-width="1" stroke-linejoin="round"/></svg>
<!-- CONSOLE-TB -->
<svg style="left:1389px;top:786.5px" width="11" height="5" viewBox="0 0 11 5"><rect x="0.6" y="0.6" width="9.2" height="3" fill="#fff" stroke="#5a5a5a" stroke-width="1.15"/></svg>
<svg style="left:1412px;top:786.5px" width="11" height="11" viewBox="0 0 11 11"><rect x="0.6" y="0.6" width="9.2" height="9.2" fill="#fff" stroke="#5a5a5a" stroke-width="1.15"/><path d="M0.6 2.9 H9.8" stroke="#5a5a5a" stroke-width="1"/></svg>
<div class="t" style="left:3.1px;top:809.5px;font-size:15.2px;transform:scaleX(0.9031);transform-origin:0 50%;">ANTPOS</div>
<div class="a" style="left:2px;top:829px;width:1432px;height:1px;background:#a0a0a0;"></div>
<div class="m" style="left:5px;top:833px">C28xx_CPU1: GEL Output:</div>
<div class="m" style="left:5px;top:853px">Memory Map Initialization Complete</div>
<div class="a" style="left:1413px;top:831px;width:21px;height:197px;background:#f0f0f0;"></div>
<svg style="left:1417.8px;top:838.6999999999999px" width="9.4" height="6.2" viewBox="0 0 9.4 6.2"><path d="M0.5 5.9 L4.7 0.6 L8.9 5.9" fill="none" stroke="#c4c4c4" stroke-width="2.3"/></svg>
<svg style="left:1417.8px;top:1013.1px" width="9.4" height="6.2" viewBox="0 0 9.4 6.2"><path d="M0.5 0.3 L4.7 5.6000000000000005 L8.9 0.3" fill="none" stroke="#c4c4c4" stroke-width="2.3"/></svg>
<div class="a" style="left:2px;top:1028px;width:1432px;height:20px;background:#f0f0f0;"></div>
<svg style="left:9.4px;top:1032.8px" width="6.2" height="9.4" viewBox="0 0 6.2 9.4"><path d="M5.9 0.5 L0.6 4.7 L5.9 8.9" fill="none" stroke="#c4c4c4" stroke-width="2.3"/></svg>
<svg style="left:1398.4px;top:1032.8px" width="6.2" height="9.4" viewBox="0 0 6.2 9.4"><path d="M0.3 0.5 L5.6000000000000005 4.7 L0.3 8.9" fill="none" stroke="#c4c4c4" stroke-width="2.3"/></svg>
<div class="a" style="left:0px;top:1048px;width:1436px;height:1px;background:#e6e6e6;"></div>
<div class="a" style="left:0px;top:1049px;width:1436px;height:1px;background:#fff;"></div>
<div class="a" style="left:1435px;top:87px;width:1px;height:963px;background:#f0f0f0;"></div>
<!-- ===== icons: title / toolbars ===== -->
<svg style="left:0;top:0" width="0" height="0"><defs><linearGradient id="gY" x1="0" y1="0" x2="0" y2="1"><stop offset="0" stop-color="#fffae0"/><stop offset="1" stop-color="#f6d26a"/></linearGradient><linearGradient id="gG" x1="0" y1="0" x2="0" y2="1"><stop offset="0" stop-color="#e6fad8"/><stop offset="1" stop-color="#98dc80"/></linearGradient><linearGradient id="gWin" x1="0" y1="0" x2="1" y2="1"><stop offset="0" stop-color="#ffffff"/><stop offset="1" stop-color="#d8e8f8"/></linearGradient><linearGradient id="gBlue" x1="0" y1="0" x2="0" y2="1"><stop offset="0" stop-color="#2f78d0"/><stop offset="1" stop-color="#74b4f0"/></linearGradient><linearGradient id="gCol" x1="0" y1="0" x2="0" y2="1"><stop offset="0" stop-color="#b8d4f4"/><stop offset="1" stop-color="#f4f9ff"/></linearGradient><radialGradient id="gBall" cx=".4" cy=".3" r=".8"><stop offset="0" stop-color="#8cc0f0"/><stop offset=".6" stop-color="#2f74c4"/><stop offset="1" stop-color="#1a4f98"/></radialGradient><linearGradient id="sfg" x1="0" y1="0" x2="0" y2="1"><stop offset="0" stop-color="#1c5ca6"/><stop offset=".55" stop-color="#2f74bb"/><stop offset="1" stop-color="#8fb6dc"/></linearGradient></defs></svg>
<svg style="left:0px;top:0px" width="22" height="25" viewBox="0 0 22 25"><g transform="translate(11.1 13.9) scale(0.95) translate(-11 -14)"><path d="M11 3.7 L20.8 8.4 V19.6 L11 24.2 L1.2 19.6 V8.4Z" fill="#e88a8a" stroke="#e88a8a" stroke-width="0.6" stroke-linejoin="round"/><path d="M11 3.9 L19.6 8.3 L11 12 L2.4 8.3Z" fill="#cf0c10"/><path d="M1.5 9.4 L10.4 13.2 V23.6 L1.5 19.3Z" fill="#cf0c10"/><path d="M11.6 13.2 L20.5 9.4 V19.3 L11.6 23.6Z" fill="#cf0c10"/><ellipse cx="11" cy="8.4" rx="2.3" ry="1.05" fill="#fff"/><ellipse cx="6.2" cy="16.3" rx="1.2" ry="1.9" fill="#fff" transform="rotate(-12 6.2 16.3)"/><ellipse cx="16" cy="16.3" rx="1.2" ry="1.9" fill="#fff" transform="rotate(12 16 16.3)"/></g></svg>
<svg style="left:0px;top:60px" width="2" height="17" viewBox="0 0 2 17"><rect x="0" y="0.0" width="2" height="2" fill="#918a78"/><rect x="1" y="1.0" width="1" height="1" fill="#c8c2b4"/><rect x="0" y="4.7" width="2" height="2" fill="#918a78"/><rect x="1" y="5.7" width="1" height="1" fill="#c8c2b4"/><rect x="0" y="9.4" width="2" height="2" fill="#918a78"/><rect x="1" y="10.4" width="1" height="1" fill="#c8c2b4"/><rect x="0" y="14.1" width="2" height="2" fill="#918a78"/><rect x="1" y="15.1" width="1" height="1" fill="#c8c2b4"/></svg>
<svg style="left:93.5px;top:60px" width="2" height="17" viewBox="0 0 2 17"><rect x="0" y="0.0" width="2" height="2" fill="#918a78"/><rect x="1" y="1.0" width="1" height="1" fill="#c8c2b4"/><rect x="0" y="4.7" width="2" height="2" fill="#918a78"/><rect x="1" y="5.7" width="1" height="1" fill="#c8c2b4"/><rect x="0" y="9.4" width="2" height="2" fill="#918a78"/><rect x="1" y="10.4" width="1" height="1" fill="#c8c2b4"/><rect x="0" y="14.1" width="2" height="2" fill="#918a78"/><rect x="1" y="15.1" width="1" height="1" fill="#c8c2b4"/></svg>
<svg style="left:121.3px;top:60px" width="2" height="17" viewBox="0 0 2 17"><rect x="0" y="0.0" width="2" height="2" fill="#918a78"/><rect x="1" y="1.0" width="1" height="1" fill="#c8c2b4"/><rect x="0" y="4.7" width="2" height="2" fill="#918a78"/><rect x="1" y="5.7" width="1" height="1" fill="#c8c2b4"/><rect x="0" y="9.4" width="2" height="2" fill="#918a78"/><rect x="1" y="10.4" width="1" height="1" fill="#c8c2b4"/><rect x="0" y="14.1" width="2" height="2" fill="#918a78"/><rect x="1" y="15.1" width="1" height="1" fill="#c8c2b4"/></svg>
<svg style="left:264.3px;top:60px" width="2" height="17" viewBox="0 0 2 17"><rect x="0" y="0.0" width="2" height="2" fill="#918a78"/><rect x="1" y="1.0" width="1" height="1" fill="#c8c2b4"/><rect x="0" y="4.7" width="2" height="2" fill="#918a78"/><rect x="1" y="5.7" width="1" height="1" fill="#c8c2b4"/><rect x="0" y="9.4" width="2" height="2" fill="#918a78"/><rect x="1" y="10.4" width="1" height="1" fill="#c8c2b4"/><rect x="0" y="14.1" width="2" height="2" fill="#918a78"/><rect x="1" y="15.1" width="1" height="1" fill="#c8c2b4"/></svg>
<svg style="left:292.3px;top:60px" width="2" height="17" viewBox="0 0 2 17"><rect x="0" y="0.0" width="2" height="2" fill="#918a78"/><rect x="1" y="1.0" width="1" height="1" fill="#c8c2b4"/><rect x="0" y="4.7" width="2" height="2" fill="#918a78"/><rect x="1" y="5.7" width="1" height="1" fill="#c8c2b4"/><rect x="0" y="9.4" width="2" height="2" fill="#918a78"/><rect x="1" y="10.4" width="1" height="1" fill="#c8c2b4"/><rect x="0" y="14.1" width="2" height="2" fill="#918a78"/><rect x="1" y="15.1" width="1" height="1" fill="#c8c2b4"/></svg>
<svg style="left:538.8px;top:60px" width="2" height="17" viewBox="0 0 2 17"><rect x="0" y="0.0" width="2" height="2" fill="#918a78"/><rect x="1" y="1.0" width="1" height="1" fill="#c8c2b4"/><rect x="0" y="4.7" width="2" height="2" fill="#918a78"/><rect x="1" y="5.7" width="1" height="1" fill="#c8c2b4"/><rect x="0" y="9.4" width="2" height="2" fill="#918a78"/><rect x="1" y="10.4" width="1" height="1" fill="#c8c2b4"/><rect x="0" y="14.1" width="2" height="2" fill="#918a78"/><rect x="1" y="15.1" width="1" height="1" fill="#c8c2b4"/></svg>
<svg style="left:586px;top:60px" width="2" height="17" viewBox="0 0 2 17"><rect x="0" y="0.0" width="2" height="2" fill="#918a78"/><rect x="1" y="1.0" width="1" height="1" fill="#c8c2b4"/><rect x="0" y="4.7" width="2" height="2" fill="#918a78"/><rect x="1" y="5.7" width="1" height="1" fill="#c8c2b4"/><rect x="0" y="9.4" width="2" height="2" fill="#918a78"/><rect x="1" y="10.4" width="1" height="1" fill="#c8c2b4"/><rect x="0" y="14.1" width="2" height="2" fill="#918a78"/><rect x="1" y="15.1" width="1" height="1" fill="#c8c2b4"/></svg>
<svg style="left:637px;top:60px" width="2" height="17" viewBox="0 0 2 17"><rect x="0" y="0.0" width="2" height="2" fill="#918a78"/><rect x="1" y="1.0" width="1" height="1" fill="#c8c2b4"/><rect x="0" y="4.7" width="2" height="2" fill="#918a78"/><rect x="1" y="5.7" width="1" height="1" fill="#c8c2b4"/><rect x="0" y="9.4" width="2" height="2" fill="#918a78"/><rect x="1" y="10.4" width="1" height="1" fill="#c8c2b4"/><rect x="0" y="14.1" width="2" height="2" fill="#918a78"/><rect x="1" y="15.1" width="1" height="1" fill="#c8c2b4"/></svg>
<svg style="left:682.9px;top:60px" width="2" height="17" viewBox="0 0 2 17"><rect x="0" y="0.0" width="2" height="2" fill="#918a78"/><rect x="1" y="1.0" width="1" height="1" fill="#c8c2b4"/><rect x="0" y="4.7" width="2" height="2" fill="#918a78"/><rect x="1" y="5.7" width="1" height="1" fill="#c8c2b4"/><rect x="0" y="9.4" width="2" height="2" fill="#918a78"/><rect x="1" y="10.4" width="1" height="1" fill="#c8c2b4"/><rect x="0" y="14.1" width="2" height="2" fill="#918a78"/><rect x="1" y="15.1" width="1" height="1" fill="#c8c2b4"/></svg>
<svg style="left:711px;top:60px" width="2" height="17" viewBox="0 0 2 17"><rect x="0" y="0.0" width="2" height="2" fill="#918a78"/><rect x="1" y="1.0" width="1" height="1" fill="#c8c2b4"/><rect x="0" y="4.7" width="2" height="2" fill="#918a78"/><rect x="1" y="5.7" width="1" height="1" fill="#c8c2b4"/><rect x="0" y="9.4" width="2" height="2" fill="#918a78"/><rect x="1" y="10.4" width="1" height="1" fill="#c8c2b4"/><rect x="0" y="14.1" width="2" height="2" fill="#918a78"/><rect x="1" y="15.1" width="1" height="1" fill="#c8c2b4"/></svg>
<svg style="left:739px;top:60px" width="2" height="17" viewBox="0 0 2 17"><rect x="0" y="0.0" width="2" height="2" fill="#918a78"/><rect x="1" y="1.0" width="1" height="1" fill="#c8c2b4"/><rect x="0" y="4.7" width="2" height="2" fill="#918a78"/><rect x="1" y="5.7" width="1" height="1" fill="#c8c2b4"/><rect x="0" y="9.4" width="2" height="2" fill="#918a78"/><rect x="1" y="10.4" width="1" height="1" fill="#c8c2b4"/><rect x="0" y="14.1" width="2" height="2" fill="#918a78"/><rect x="1" y="15.1" width="1" height="1" fill="#c8c2b4"/></svg>
<svg style="left:786px;top:60px" width="2" height="17" viewBox="0 0 2 17"><rect x="0" y="0.0" width="2" height="2" fill="#918a78"/><rect x="1" y="1.0" width="1" height="1" fill="#c8c2b4"/><rect x="0" y="4.7" width="2" height="2" fill="#918a78"/><rect x="1" y="5.7" width="1" height="1" fill="#c8c2b4"/><rect x="0" y="9.4" width="2" height="2" fill="#918a78"/><rect x="1" y="10.4" width="1" height="1" fill="#c8c2b4"/><rect x="0" y="14.1" width="2" height="2" fill="#918a78"/><rect x="1" y="15.1" width="1" height="1" fill="#c8c2b4"/></svg>
<svg style="left:9px;top:61px" width="16" height="15" viewBox="0 0 16 15"><rect x="0.5" y="2.6" width="13" height="11.6" fill="url(#gWin)" stroke="#a48c54" stroke-width="1"/><rect x="1" y="3.1" width="12" height="2.4" fill="url(#gBlue)"/><path d="M3 13.6 Q10.6 13.2 12.2 6.4" fill="none" stroke="#f2dc9a" stroke-width="1.3"/><path d="M11.8 0.2999999999999998 L12.780000000000001 2.82 L15.3 3.8 L12.780000000000001 4.78 L11.8 7.3 L10.82 4.78 L8.3 3.8 L10.82 2.82Z" fill="#fff6c8" stroke="#c89820" stroke-width="1" stroke-linejoin="round"/></svg>
<svg style="left:32.0px;top:65.9px" width="9" height="5" viewBox="0 0 9 5"><path d="M0 0 H9 L4.5 5 Z" fill="#000"/></svg>
<svg style="left:50px;top:61px" width="15" height="15" viewBox="0 0 15 15"><path d="M1.5 0.6 H13.5 Q14.4 0.6 14.4 1.5 V13.5 Q14.4 14.4 13.5 14.4 H1.5 Q0.6 14.4 0.6 13.5 V1.5 Q0.6 0.6 1.5 0.6Z" fill="#e4e4e4" stroke="#c2c2c2" stroke-width="1.1"/><rect x="3.2" y="0.8" width="8.6" height="5.6" fill="#f3f3f3" stroke="#cfcfcf" stroke-width="0.8"/><path d="M4.6 2.6 H10.4 M4.6 4.4 H10.4" stroke="#d2d2d2" stroke-width="0.8"/><rect x="4" y="9.4" width="7" height="5" fill="#d9d9d9" stroke="#c2c2c2" stroke-width="0.9"/><rect x="7" y="10.6" width="1.6" height="3" fill="#f4f4f4"/></svg>
<svg style="left:73px;top:60.5px" width="16" height="16" viewBox="0 0 16 16"><rect x="0.6" y="0.6" width="10.2" height="10.6" rx="1" fill="#e6e6e6" stroke="#c4c4c4" stroke-width="1"/><rect x="2.8000000000000003" y="2.6" width="10.2" height="10.6" rx="1" fill="#e6e6e6" stroke="#c4c4c4" stroke-width="1"/><rect x="5.0" y="4.6" width="10.2" height="10.6" rx="1" fill="#e6e6e6" stroke="#c4c4c4" stroke-width="1"/><rect x="7" y="5" width="5.8" height="3.2" fill="#f2f2f2" stroke="#d0d0d0" stroke-width="0.7"/><rect x="7.4" y="11" width="5" height="4" fill="#dadada" stroke="#c4c4c4" stroke-width="0.8"/><rect x="9.4" y="12" width="1.2" height="2.4" fill="#f6f6f6"/></svg>
<svg style="left:101.5px;top:61px" width="14" height="14" viewBox="0 0 14 14"><rect x="0.9" y="0.9" width="11.6" height="8.8" rx="1.4" fill="#e6effb" stroke="#2a5cae" stroke-width="1.8"/><path d="M3.2 3.8 H8.8 M3.2 6 H9.8" stroke="#2c4e94" stroke-width="1"/><path d="M4.6 10.4 H8.8 V11.6 H4.6Z" fill="#2a5cae"/><path d="M2.2 12.4 H11.2" stroke="#2a5cae" stroke-width="1.5"/></svg>
<div class="a" style="left:125px;top:57px;width:23px;height:21px;background:#dcebf9;border:1px solid #b4d6f5"></div>
<svg style="left:129px;top:62.6px" width="16" height="11" viewBox="0 0 16 11"><rect x="0.5" y="0.5" width="4" height="9.4" fill="#f2cc50" stroke="#a8801c" stroke-width="1"/><rect x="1.2" y="1.2" width="1.4" height="8" fill="#fff0b0"/><path d="M6.2 0.3 L15 5.2 L6.2 10.1Z" fill="#4ca854" stroke="#2e8a3e" stroke-width="0.8" stroke-linejoin="round"/><path d="M7.2 2.2 L11.4 4.6 L7.2 5.6Z" fill="#86cc86" opacity=".8"/></svg>
<svg style="left:154px;top:62.6px" width="12" height="12" viewBox="0 0 12 12"><rect x="0.5" y="0.5" width="4" height="10.6" fill="#e6e6e6" stroke="#b0b0b0" stroke-width="1"/><rect x="6.8" y="0.5" width="4" height="10.6" fill="#e6e6e6" stroke="#b0b0b0" stroke-width="1"/></svg>
<svg style="left:177px;top:63px" width="11" height="11" viewBox="0 0 11 11"><rect x="0.6" y="0.6" width="9.8" height="9.8" rx="1.6" fill="#e62a34" stroke="#f07a80" stroke-width="1.2"/><rect x="1.6" y="1.6" width="7.8" height="3.6" rx="1" fill="#f0525a" opacity=".6"/></svg>
<svg style="left:198px;top:62.6px" width="16" height="12" viewBox="0 0 16 12"><path d="M0.6 0.8 H7.6 Q9.8 0.8 9.8 3 V5.4 H12.2 L8.4 9.6 L4.6 5.4 H7 V3.4 H0.6Z" fill="url(#gY)" stroke="#c08a1c" stroke-width="1" stroke-linejoin="round"/><path d="M0 11.6 Q0.2 9.4 2.2 9.4 Q4.2 9.4 4.4 11.6Z M10.8 11.6 Q11 9.4 13 9.4 Q15 9.4 15.2 11.6Z" fill="#2c4f8c"/></svg>
<svg style="left:221px;top:62.6px" width="16" height="12" viewBox="0 0 16 12"><path d="M0.8 6.2 Q0.6 0.8 6.6 0.8 Q12 0.8 12.4 5 H14.8 L11.2 9.4 L7.4 5 H9.8 Q9.4 3.4 6.6 3.4 Q3.6 3.4 3.4 6.2Z" fill="url(#gY)" stroke="#c08a1c" stroke-width="1" stroke-linejoin="round"/><path d="M3.8 11.6 Q4 9.4 6 9.4 Q8 9.4 8.2 11.6Z" fill="#2c4f8c"/></svg>
<svg style="left:244px;top:62.6px" width="16" height="12" viewBox="0 0 16 12"><path d="M6.6 10.4 V5.4 Q6.6 3.2 8.8 3.2 H10.6 V0.8 L15 4.4 L10.6 8 V5.8 H9.2 V10.4Z" fill="url(#gY)" stroke="#c08a1c" stroke-width="1" stroke-linejoin="round"/><path d="M0 11.6 Q0.2 9.4 2.2 9.4 Q4.2 9.4 4.4 11.6Z M10.8 11.6 Q11 9.4 13 9.4 Q15 9.4 15.2 11.6Z" fill="#2c4f8c"/></svg>
<svg style="left:272px;top:60.8px" width="14" height="14" viewBox="0 0 14 14"><rect x="0" y="0" width="14" height="13.4" rx="0.8" fill="#0c0c0c"/><rect x="1.3" y="1.3" width="3" height="2.7" fill="#ffd060"/><rect x="1.3" y="1.3" width="3" height="1.2" fill="#fff4d0"/><rect x="5.5" y="1.3" width="3" height="2.7" fill="#ffd060"/><rect x="5.5" y="1.3" width="3" height="1.2" fill="#fff4d0"/><rect x="9.700000000000001" y="1.3" width="3" height="2.7" fill="#ffd060"/><rect x="9.700000000000001" y="1.3" width="3" height="1.2" fill="#fff4d0"/><rect x="1.3" y="5.3999999999999995" width="3" height="2.7" fill="#ffd060"/><rect x="1.3" y="5.3999999999999995" width="3" height="1.2" fill="#fff4d0"/><rect x="5.5" y="5.3999999999999995" width="3" height="2.7" fill="#ffd060"/><rect x="5.5" y="5.3999999999999995" width="3" height="1.2" fill="#fff4d0"/><rect x="9.700000000000001" y="5.3999999999999995" width="3" height="2.7" fill="#ffd060"/><rect x="9.700000000000001" y="5.3999999999999995" width="3" height="1.2" fill="#fff4d0"/><rect x="1.3" y="9.5" width="3" height="2.7" fill="#ffd060"/><rect x="1.3" y="9.5" width="3" height="1.2" fill="#fff4d0"/><rect x="5.5" y="9.5" width="3" height="2.7" fill="#ffd060"/><rect x="5.5" y="9.5" width="3" height="1.2" fill="#fff4d0"/><rect x="9.700000000000001" y="9.5" width="3" height="2.7" fill="#ffd060"/><rect x="9.700000000000001" y="9.5" width="3" height="1.2" fill="#fff4d0"/></svg>
<div class="a" style="left:296px;top:57px;width:23px;height:21px;background:#cfe3fa;border:1px solid #98c8f8"></div>
<svg style="left:300.5px;top:60.8px" width="16" height="15" viewBox="0 0 16 15"><rect x="3.4" y="0.5" width="9" height="7.2" fill="#e8f2fc" stroke="#6a6a9a" stroke-width="1"/><rect x="3.9" y="1" width="8" height="1.8" fill="#3c78d0"/><path d="M6.6 7.8 V10 M9.4 7.8 V10" stroke="#9a6a6a" stroke-width="1"/><path d="M0.4 10.6 H15.6 M0.4 13.2 H15.6" stroke="#b08a8a" stroke-width="1"/><rect x="5.4" y="9.2" width="5.2" height="5.4" fill="#2f9a4c" stroke="#1f7a38" stroke-width="0.8"/><rect x="7.2" y="11" width="1.6" height="1.8" fill="#d8f0d0"/></svg>
<svg style="left:323px;top:60px" width="16" height="16" viewBox="0 0 16 16"><g stroke="#b4b4b4" stroke-width="1" fill="none"><path d="M4.6 0.6 V3 M0.6 4.8 H3 M1.6 1.4 L3.2 3 M7.8 1.4 L6.2 3 M1.6 8.2 L3.2 6.6 M8.6 4.6 H6.6"/></g><ellipse cx="5" cy="5" rx="2" ry="2.2" fill="#d0d0d0" stroke="#aaa" stroke-width="0.8"/><path d="M6 7.8 L8.4 5.8 L15.2 11.6 L13.6 13.2 L12.6 12.6 L12.2 15 L9.6 14.6 L10 12.2 L8.2 12.4Z" fill="#ececec" stroke="#b0b0b0" stroke-width="1" stroke-linejoin="round"/></svg>
<svg style="left:346.6px;top:60.4px" width="16" height="16" viewBox="0 0 16 16"><rect x="3" y="0.6" width="9.6" height="10.6" fill="#fbfbfb" stroke="#a09a8a" stroke-width="1"/><path d="M6.6 2.4 Q5.2 2.4 5.4 4 Q5.6 5.6 4.4 5.8 Q5.6 6 5.4 7.6 Q5.2 9.2 6.6 9.2 M9 2.4 Q10.4 2.4 10.2 4 Q10 5.6 11.2 5.8 Q10 6 10.2 7.6 Q10.4 9.2 9 9.2" fill="none" stroke="#16607c" stroke-width="1.4"/><path d="M0.6 14.6 V6.8 H2.6 V10.6" fill="#e8b85c" stroke="#b87a28" stroke-width="1"/><path d="M0.6 14.6 L3.4 10.4 H15.4 L12 14.6Z" fill="#f2c870" stroke="#b87a28" stroke-width="1" stroke-linejoin="round"/></svg>
<svg style="left:370.0px;top:65.9px" width="9" height="5" viewBox="0 0 9 5"><path d="M0 0 H9 L4.5 5 Z" fill="#000"/></svg>
<svg style="left:386.5px;top:59.6px" width="17" height="16" viewBox="0 0 17 16"><circle cx="10.4" cy="7.4" r="5.8" fill="#ffffff" stroke="#6e6e6e" stroke-width="1.2"/><path d="M12.4 4.8 L9.2 7.4 L12.2 9.6" fill="none" stroke="#333" stroke-width="1"/><path d="M0.2 1.4 L2.2 0 L8 5.2 L5.6 7.6Z" fill="#e81c3c"/><rect x="0.6" y="8.6" width="2.8" height="5.6" fill="#fbe9b0" stroke="#b8862a" stroke-width="1"/><rect x="4.4" y="8.6" width="2.8" height="5.6" fill="#fbe9b0" stroke="#b8862a" stroke-width="1"/></svg>
<svg style="left:410.5px;top:59.6px" width="17" height="16" viewBox="0 0 17 16"><circle cx="10.4" cy="7.4" r="5.8" fill="#f2f2f2" stroke="#c8c8c8" stroke-width="1.2"/><path d="M12.4 4.8 L9.2 7.4 L12.2 9.6" fill="none" stroke="#c0c0c0" stroke-width="1"/><path d="M0.4 0.4 L3.4 0.6 L7 6 L5 7.4 L1 3.6Z" fill="#c4c4c4"/><path d="M1 8.4 L5.6 11.2 L1 14.6Z" fill="#d0d0d0" stroke="#bcbcbc" stroke-width="0.6"/></svg>
<svg style="left:434px;top:59.4px" width="18" height="18" viewBox="0 0 18 18"><path d="M5.4 9.6 L11.8 5.4 L16.8 11.4 L10.2 16.2Z" fill="#0a0a0a"/><path d="M10.86 15.72 L11.92 17.18" stroke="#0a0a0a" stroke-width="1.3"/><path d="M12.58 14.47 L13.63 15.93" stroke="#0a0a0a" stroke-width="1.3"/><path d="M14.29 13.22 L15.35 14.68" stroke="#0a0a0a" stroke-width="1.3"/><path d="M16.01 11.98 L17.07 13.43" stroke="#0a0a0a" stroke-width="1.3"/><path d="M2.22 4.49 A3.5 3.5 0 0 1 8.63 3.65" fill="none" stroke="#a87c18" stroke-width="3.6"/><path d="M8.98 6.31 A3.5 3.5 0 0 1 2.57 7.15" fill="none" stroke="#a87c18" stroke-width="3.6"/><path d="M2.22 4.49 A3.5 3.5 0 0 1 8.63 3.65" fill="none" stroke="#f8d860" stroke-width="2"/><path d="M11.06 2.25 L6.21 5.05 L10.23 6.42Z" fill="#f8d860" stroke="#a87c18" stroke-width="0.9" stroke-linejoin="round"/><path d="M8.98 6.31 A3.5 3.5 0 0 1 2.57 7.15" fill="none" stroke="#f8d860" stroke-width="2"/><path d="M0.14 8.55 L4.99 5.75 L0.97 4.38Z" fill="#f8d860" stroke="#a87c18" stroke-width="0.9" stroke-linejoin="round"/></svg>
<svg style="left:458.0px;top:65.9px" width="9" height="5" viewBox="0 0 9 5"><path d="M0 0 H9 L4.5 5 Z" fill="#000"/></svg>
<svg style="left:476px;top:60.8px" width="16" height="16" viewBox="0 0 16 16"><path d="M7.4 0.4 L14.2 3.6 L7.4 7Z" fill="#3cae5c" stroke="#2a8a44" stroke-width="0.6" stroke-linejoin="round"/><path d="M4.6 5 L8.6 9 H6.2 Q6.2 11.8 8.6 11.8 H10.6 Q12.6 11.8 12.8 9 H15.2 Q15 14.4 10.8 14.6 H8 Q3.4 14.4 3.2 9 H0.6Z" fill="#fff2c0" stroke="#c48a1c" stroke-width="1.1" stroke-linejoin="round"/></svg>
<svg style="left:500.4px;top:60px" width="15" height="15" viewBox="0 0 15 15"><circle cx="5.4" cy="9" r="5" fill="url(#gBall)"/><ellipse cx="4.6" cy="6.6" rx="3" ry="1.6" fill="#a8d0f4" opacity=".7"/><path d="M10.6 0.3999999999999999 L11.608 2.992 L14.2 4 L11.608 5.008 L10.6 7.6 L9.591999999999999 5.008 L7.0 4 L9.591999999999999 2.992Z" fill="#fff6c8" stroke="#c89820" stroke-width="1" stroke-linejoin="round"/></svg>
<svg style="left:522.9px;top:65.9px" width="9" height="5" viewBox="0 0 9 5"><path d="M0 0 H9 L4.5 5 Z" fill="#000"/></svg>
<svg style="left:546.6px;top:60.6px" width="16" height="16" viewBox="0 0 16 16"><g transform="translate(8 8) scale(0.9) rotate(-32) translate(-8 -8)"><g stroke="#2c6a6a" stroke-width="1.1" fill="none" stroke-linecap="round">
<path d="M4.6 5.4 L1.6 3.6 L0.6 4.6 M4 8.4 H0.8 M4.6 11 L2.2 13.2 L2.6 14.6 M11.4 5.4 L14.4 3.6 L15.4 4.6 M12 8.4 H15.2 M11.4 11 L13.8 13.2 L13.4 14.6 M6.4 3.8 L5.4 1 M9.6 3.8 L10.6 1"/></g>
<ellipse cx="8" cy="8.8" rx="3.5" ry="4.9" fill="#9ccb94" stroke="#2c6a5c" stroke-width="1"/>
<ellipse cx="7.2" cy="8.6" rx="1.5" ry="3" fill="#d4ecc8" opacity=".85"/>
<path d="M5.4 4.8 Q8 2.4 10.6 4.8 Q8 6 5.4 4.8Z" fill="#2c6a5c"/></g></svg>
<svg style="left:570.0px;top:65.9px" width="9" height="5" viewBox="0 0 9 5"><path d="M0 0 H9 L4.5 5 Z" fill="#000"/></svg>
<svg style="left:593px;top:62.6px" width="16" height="12" viewBox="0 0 16 12"><path d="M0.6 0.8 H7.6 Q9.8 0.8 9.8 3 V5.4 H12.2 L8.4 9.6 L4.6 5.4 H7 V3.4 H0.6Z" fill="url(#gG)" stroke="#2ea83a" stroke-width="1" stroke-linejoin="round"/><path d="M0 11.6 Q0.2 9.4 2.2 9.4 Q4.2 9.4 4.4 11.6Z M10.8 11.6 Q11 9.4 13 9.4 Q15 9.4 15.2 11.6Z" fill="#2c4f8c"/></svg>
<svg style="left:616px;top:62.6px" width="16" height="12" viewBox="0 0 16 12"><path d="M0.8 6.2 Q0.6 0.8 6.6 0.8 Q12 0.8 12.4 5 H14.8 L11.2 9.4 L7.4 5 H9.8 Q9.4 3.4 6.6 3.4 Q3.6 3.4 3.4 6.2Z" fill="url(#gG)" stroke="#2ea83a" stroke-width="1" stroke-linejoin="round"/><path d="M3.8 11.6 Q4 9.4 6 9.4 Q8 9.4 8.2 11.6Z" fill="#2c4f8c"/></svg>
<svg style="left:643.4px;top:59.6px" width="17" height="16" viewBox="0 0 17 16"><path d="M6.8 5.6 L9.6 4 L16 12.8 Q15 15 12.6 14.8Z" fill="#dcc0a0" stroke="#b89a7a" stroke-width="0.8" stroke-linejoin="round"/><path d="M0.6 6.2 Q1.6 1.6 6.4 0.8 Q9.4 0.2 11.4 1 L10.8 3.4 L8.6 3.2 L9.8 5 L6 7.2 L4.8 5.4 Q3.6 6 3.2 8.6Z" fill="#bcbcbc" stroke="#8e8e8e" stroke-width="0.8" stroke-linejoin="round"/><path d="M2 5.2 Q3.4 2.4 6.8 1.8" stroke="#e8e8e8" stroke-width="1" fill="none"/></svg>
<svg style="left:667.0px;top:65.1px" width="9" height="5" viewBox="0 0 9 5"><path d="M0 0 H9 L4.5 5 Z" fill="#6c6c76"/></svg>
<svg style="left:689px;top:61.6px" width="16" height="13" viewBox="0 0 16 13"><path d="M3.6 0.6 H15 V12 H3.6" fill="#ececec" stroke="#b4b4b4" stroke-width="1.1"/><path d="M4.6 0.6 L2.8 0.6 L0.6 2.8 L2.6 4.8 L5.6 2.4 M5.4 6 L2.8 6 L0.6 8.4 L3 10.8 L5.6 8.6 M3.6 10.8 V12" fill="#f4f4f4" stroke="#b4b4b4" stroke-width="1" stroke-linejoin="round"/></svg>
<svg style="left:716.4px;top:60px" width="17" height="16" viewBox="0 0 17 16"><circle cx="10" cy="6.6" r="5.4" fill="#f4fbfc" stroke="#1a8ea4" stroke-width="2"/><path d="M13.2 3 L6.8 9.8" stroke="#1a8ea4" stroke-width="1.8"/><path d="M5.8 10.8 L1 15" stroke="#1a8ea4" stroke-width="2.2" stroke-linecap="round"/></svg>
<svg style="left:745.6px;top:60.4px" width="17" height="16" viewBox="0 0 17 16"><path d="M9.4 2.4 L14.6 0.4 L16.4 2.2 L15.2 7.6 L11 10.4 L7 6.2Z" fill="#fbe6a4" stroke="#d8a040" stroke-width="1" stroke-linejoin="round"/><path d="M12 3.6 L14.4 2.4" stroke="#2a5cae" stroke-width="1.4"/><path d="M13.8 3 L10.6 6.4" stroke="#e8c070" stroke-width="0.8"/><path d="M7 6.2 L11 10.4 L8.8 12.8 L4.4 8.6Z" fill="#b0aab0" stroke="#8a7a6a" stroke-width="0.8"/><path d="M4.4 8.6 L8.8 12.8 L5.4 15.2 Q2.8 16.2 0.8 14.4 Q0.4 12.6 1.6 11.4Z" fill="#fff8dc" stroke="#f0c860" stroke-width="0.9"/><path d="M2.6 11.6 L6 14.6" stroke="#f6c040" stroke-width="1.4"/></svg>
<svg style="left:769.9px;top:65.9px" width="9" height="5" viewBox="0 0 9 5"><path d="M0 0 H9 L4.5 5 Z" fill="#000"/></svg>
<svg style="left:792px;top:61px" width="17" height="15" viewBox="0 0 17 15"><rect x="0.5" y="3.2" width="13.4" height="11.2" fill="url(#gWin)" stroke="#9a8a5a" stroke-width="1"/><rect x="1" y="3.7" width="12.4" height="2.4" fill="url(#gBlue)"/><path d="M9.0 8.6 L11.799999999999999 5.2" stroke="#3a3a3a" stroke-width="1.1"/><path d="M10.0 3.6 L14.2 7.4 L16.0 6.4 L14.8 4.4 L16.2 2.8 L13.4 0.3999999999999999 L11.799999999999999 1.7999999999999998 L10.399999999999999 1.4Z" fill="#38a848" stroke="#1f8a34" stroke-width="0.8" stroke-linejoin="round"/><circle cx="13.0" cy="3.2" r="1" fill="#8ee09a"/></svg>
<svg style="left:526px;top:93.6px" width="14" height="14" viewBox="0 0 14 14"><rect x="0.5" y="0.5" width="10.4" height="10.4" fill="#dbe6f8" stroke="#9aaad0" stroke-width="1"/><rect x="2.6" y="2.6" width="10.4" height="10.4" fill="url(#gCol)" stroke="#8898c4" stroke-width="1"/><path d="M4.4 7.9 H11.2" stroke="#1a4a8a" stroke-width="1.15"/></svg>
<svg style="left:548px;top:92px" width="16" height="16" viewBox="0 0 16 16"><path d="M0.20 1.90 L1.90 0.20 L5.40 3.70 L8.90 0.20 L10.60 1.90 L7.10 5.40 L10.60 8.90 L8.90 10.60 L5.40 7.10 L1.90 10.60 L0.20 8.90 L3.70 5.40Z" fill="#e2e2e2" stroke="#b8b8b8" stroke-width="0.9" stroke-linejoin="round"/><path d="M4.80 6.90 L6.70 5.00 L10.20 8.50 L13.70 5.00 L15.60 6.90 L12.10 10.40 L15.60 13.90 L13.70 15.80 L10.20 12.30 L6.70 15.80 L4.80 13.90 L8.30 10.40Z" fill="#b0b0b0" stroke="#a6a6a6" stroke-width="0.9" stroke-linejoin="round"/></svg>
<svg style="left:1163px;top:93.6px" width="14" height="14" viewBox="0 0 14 14"><rect x="0.5" y="0.5" width="10.4" height="10.4" fill="#dbe6f8" stroke="#9aaad0" stroke-width="1"/><rect x="2.6" y="2.6" width="10.4" height="10.4" fill="url(#gCol)" stroke="#8898c4" stroke-width="1"/><path d="M4.4 7.9 H11.2" stroke="#1a4a8a" stroke-width="1.15"/></svg>
<div class="a" style="left:1183px;top:91px;width:1px;height:18px;background:#8e8ea0"></div>
<svg style="left:1193px;top:94px" width="13" height="13" viewBox="0 0 13 13"><path d="M4.2 0.6 H8.6 V4.2 H12.2 V8.6 H8.6 V12.2 H4.2 V8.6 H0.6 V4.2 H4.2Z" fill="#a6d63c" stroke="#5e9e2c" stroke-width="1" stroke-linejoin="round"/><path d="M5.2 1.6 H7.6 V5.2 H11.2 V6.4 H1.6 V5.2 H5.2Z" fill="#d4f07a" opacity=".8"/></svg>
<svg style="left:1217px;top:93.8px" width="13" height="13" viewBox="0 0 13 13"><path d="M0.30 2.40 L2.40 0.30 L6.50 4.40 L10.60 0.30 L12.70 2.40 L8.60 6.50 L12.70 10.60 L10.60 12.70 L6.50 8.60 L2.40 12.70 L0.30 10.60 L4.40 6.50Z" fill="#b4b4b4" stroke="#b4b4b4" stroke-width="0.8" stroke-linejoin="round"/></svg>
<svg style="left:1239px;top:92px" width="16" height="16" viewBox="0 0 16 16"><path d="M0.20 1.90 L1.90 0.20 L5.40 3.70 L8.90 0.20 L10.60 1.90 L7.10 5.40 L10.60 8.90 L8.90 10.60 L5.40 7.10 L1.90 10.60 L0.20 8.90 L3.70 5.40Z" fill="#e2e2e2" stroke="#8a8a8a" stroke-width="0.9" stroke-linejoin="round"/><path d="M4.80 6.90 L6.70 5.00 L10.20 8.50 L13.70 5.00 L15.60 6.90 L12.10 10.40 L15.60 13.90 L13.70 15.80 L10.20 12.30 L6.70 15.80 L4.80 13.90 L8.30 10.40Z" fill="#7c7c7c" stroke="#4e4e4e" stroke-width="0.9" stroke-linejoin="round"/></svg>
<svg style="left:1260.6px;top:92px" width="17" height="16" viewBox="0 0 17 16"><path d="M9.6 14.2 V7.4 H7.4 L11.4 1.2 L15.6 5.6 L13.2 7.4 V14.2Z" fill="#fff4c8" stroke="#c8901c" stroke-width="1" stroke-linejoin="round"/><path d="M2.8 1.8 H6.4 V8.4 H8.8 L5 14.6 L0.6 10.2 L2.8 8.4Z" fill="#fff4c8" stroke="#c8901c" stroke-width="1" stroke-linejoin="round"/><path d="M4.2 3 V9.6 M11.4 13 V6.4" stroke="#fffdf0" stroke-width="1.2"/></svg>
<div class="a" style="left:1283px;top:91px;width:1px;height:18px;background:#8e8ea0"></div>
<svg style="left:1293px;top:92.6px" width="16" height="15" viewBox="0 0 16 15"><rect x="0.5" y="2.6" width="13" height="11.6" fill="url(#gWin)" stroke="#a48c54" stroke-width="1"/><rect x="1" y="3.1" width="12" height="2.4" fill="url(#gBlue)"/><path d="M3 13.6 Q10.6 13.2 12.2 6.4" fill="none" stroke="#f2dc9a" stroke-width="1.3"/><path d="M11.8 0.2999999999999998 L12.780000000000001 2.82 L15.3 3.8 L12.780000000000001 4.78 L11.8 7.3 L10.82 4.78 L8.3 3.8 L10.82 2.82Z" fill="#fff6c8" stroke="#c89820" stroke-width="1" stroke-linejoin="round"/></svg>
<svg style="left:1317px;top:93.6px" width="15" height="13" viewBox="0 0 15 13"><rect x="0.5" y="2.6" width="11" height="9.8" fill="url(#gWin)" stroke="#7a9ac8" stroke-width="1"/><rect x="1" y="3.1" width="10" height="2.2" fill="url(#gBlue)"/><path d="M6 9 L9 6" stroke="#2a4a7a" stroke-width="1"/><path d="M8.2 4.6 L10.6 7 L14 3.2 L12.2 1Z" fill="#9a9a9a" stroke="#6e6e6e" stroke-width="0.8" stroke-linejoin="round"/></svg>
<svg style="left:1339px;top:93px" width="15" height="15" viewBox="0 0 15 15"><path d="M14 8.8 Q14.4 2.4 8.6 2 V0.2 L4.4 3.4 L8.6 6.8 V5 Q11 5.2 11.2 8.8Z" fill="#fbe28e" stroke="#c8901c" stroke-width="1" stroke-linejoin="round"/><path d="M1 6.2 Q0.6 12.6 6.4 13 V14.8 L10.6 11.6 L6.4 8.2 V10 Q4 9.8 3.8 6.2Z" fill="#fbe28e" stroke="#c8901c" stroke-width="1" stroke-linejoin="round"/></svg>
<svg style="left:1203px;top:783px" width="16" height="16" viewBox="0 0 16 16"><path d="M0.5 0.5 H7.0 L9.9 3.4 V12.7 H0.5Z" fill="#fbfaf2" stroke="#b4aa8a" stroke-width="1" stroke-linejoin="round"/><path d="M2 3.6 H6.4 M2 5.6 H8.2 M2 7.6 H8.2 M2 9.6 H8.2 M2 11.4 H6.6" stroke="#5a7ac0" stroke-width="1"/><path d="M7.80 9.10 L9.10 7.80 L11.60 10.30 L14.10 7.80 L15.40 9.10 L12.90 11.60 L15.40 14.10 L14.10 15.40 L11.60 12.90 L9.10 15.40 L7.80 14.10 L10.30 11.60Z" fill="#8a8a8a" stroke="#7a7a7a" stroke-width="0.6" stroke-linejoin="round"/></svg>
<svg style="left:1225.6px;top:783.6px" width="16" height="15" viewBox="0 0 16 15"><rect x="1.8" y="0.6" width="13.2" height="13.2" fill="#e4eefb" stroke="#8898b8" stroke-width="1"/><rect x="11" y="1.2" width="3.4" height="12" fill="#fff" stroke="#6a8ac8" stroke-width="0.8"/><rect x="11.6" y="5" width="2.2" height="4.6" fill="#cfd8ea"/><rect x="12.2" y="2.4" width="1.2" height="1.4" fill="#3a6ac0"/><rect x="12.2" y="10.8" width="1.2" height="1.4" fill="#3a6ac0"/><path d="M2.2 9 V7.6 Q2.2 5.6 4.2 5.6 Q6.2 5.6 6.2 7.6 V9" fill="none" stroke="#c88a1c" stroke-width="1.3"/><rect x="0.6" y="8.8" width="7.2" height="5.6" rx="0.8" fill="#f0b83c" stroke="#b87818" stroke-width="1"/><rect x="3.6" y="10.4" width="1.2" height="2.2" fill="#8a5a10"/></svg>
<svg style="left:1249px;top:783px" width="16" height="15" viewBox="0 0 16 15"><path d="M0.5 0.5 H7.4 L10.3 3.4 V12.7 H0.5Z" fill="#fbfaf2" stroke="#b4aa8a" stroke-width="1" stroke-linejoin="round"/><path d="M2 3.6 H6.4 M2 5.6 H8.2 M2 7.6 H8.2 M2 9.6 H8.2 M2 11.4 H6.6" stroke="#5a7ac0" stroke-width="1"/><path d="M12.4 2.6 H14.6 V9.4 H9.4 V11.6 L5.8 8.4 L9.4 5.2 V7.2 H12.4Z" fill="#fff2c4" stroke="#d8a030" stroke-width="1" stroke-linejoin="round"/></svg>
<div class="a" style="left:1270px;top:782px;width:1px;height:18px;background:#8a8a8a"></div>
<svg style="left:1280.6px;top:784px" width="16" height="14" viewBox="0 0 16 14"><rect x="0.5" y="3.8" width="12.6" height="9.6" fill="url(#gWin)" stroke="#8a9ac0" stroke-width="1"/><rect x="1" y="4.3" width="11.6" height="2.2" fill="url(#gBlue)"/><path d="M6.4 8 L9 10.6" stroke="#2a4a7a" stroke-width="0.9"/><path d="M7.800000000000001 8.399999999999999 L10.6 5.0" stroke="#3a3a3a" stroke-width="1.1"/><path d="M8.8 3.4 L13.0 7.199999999999999 L14.8 6.199999999999999 L13.600000000000001 4.2 L15.0 2.5999999999999996 L12.200000000000001 0.19999999999999973 L10.6 1.5999999999999996 L9.2 1.1999999999999997Z" fill="#38a848" stroke="#1f8a34" stroke-width="0.8" stroke-linejoin="round"/><circle cx="11.8" cy="3.0" r="1" fill="#8ee09a"/></svg>
<svg style="left:1305px;top:784px" width="14" height="14" viewBox="0 0 14 14"><rect x="0.9" y="0.9" width="11.6" height="8.8" rx="1.4" fill="#e6effb" stroke="#2a5cae" stroke-width="1.8"/><path d="M3.2 3.8 H8.8 M3.2 6 H9.8" stroke="#2c4e94" stroke-width="1"/><path d="M4.6 10.4 H8.8 V11.6 H4.6Z" fill="#2a5cae"/><path d="M2.2 12.4 H11.2" stroke="#2a5cae" stroke-width="1.5"/></svg>
<svg style="left:1327.0px;top:788.9px" width="9" height="5" viewBox="0 0 9 5"><path d="M0 0 H9 L4.5 5 Z" fill="#000"/></svg>
<svg style="left:1346px;top:783px" width="16" height="15" viewBox="0 0 16 15"><rect x="0.5" y="2.6" width="13" height="11.6" fill="url(#gWin)" stroke="#a48c54" stroke-width="1"/><rect x="1" y="3.1" width="12" height="2.4" fill="url(#gBlue)"/><path d="M3 13.6 Q10.6 13.2 12.2 6.4" fill="none" stroke="#f2dc9a" stroke-width="1.3"/><path d="M11.8 0.2999999999999998 L12.780000000000001 2.82 L15.3 3.8 L12.780000000000001 4.78 L11.8 7.3 L10.82 4.78 L8.3 3.8 L10.82 2.82Z" fill="#fff6c8" stroke="#c89820" stroke-width="1" stroke-linejoin="round"/></svg>
<svg style="left:1369.1px;top:788.9px" width="9" height="5" viewBox="0 0 9 5"><path d="M0 0 H9 L4.5 5 Z" fill="#000"/></svg>
</body>
</html>
